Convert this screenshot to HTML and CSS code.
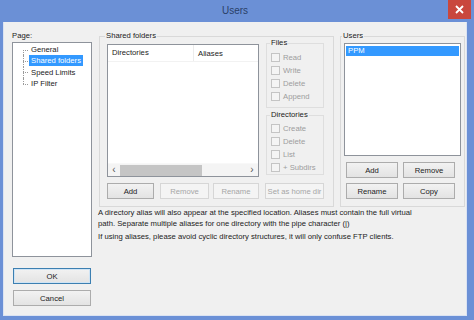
FILE: index.html
```html
<!DOCTYPE html>
<html lang="en">
<head>
    <meta charset="UTF-8">
    <title>Users</title>
    <link rel="stylesheet" href="styles.css">
</head>
<body>
    <div class="window">
        <div class="titlebar">
            <span class="title">Users</span>
            <button class="close-btn" aria-label="Close">
                <svg width="9" height="9" viewBox="0 0 9 9"><path d="M1 1L8 8M8 1L1 8" stroke="#fff" stroke-width="1.8"/></svg>
            </button>
        </div>
        <div class="client">
            <div class="side">
                <div class="page-label">Page:</div>
                <ul class="tree">
                    <li><span>General</span></li>
                    <li class="selected"><span>Shared folders</span></li>
                    <li><span>Speed Limits</span></li>
                    <li><span>IP Filter</span></li>
                </ul>
                <button class="btn default ok-btn">OK</button>
                <button class="btn cancel-btn">Cancel</button>
            </div>

            <div class="main">
                <div class="groups">
                    <fieldset class="group shared">
                        <legend>Shared folders</legend>
                        <div class="shared-body">
                            <div class="listview">
                                <div class="lv-header">
                                    <span class="col-dir">Directories</span>
                                    <span class="col-alias">Aliases</span>
                                </div>
                                <div class="lv-body"></div>
                                <div class="hscroll">
                                    <span class="arrow">&lsaquo;</span>
                                    <div class="track"><div class="thumb"></div></div>
                                    <span class="arrow">&rsaquo;</span>
                                </div>
                            </div>
                            <div class="perms">
                                <fieldset class="subgroup files">
                                    <legend>Files</legend>
                                    <label class="check"><span class="box"></span>Read</label>
                                    <label class="check"><span class="box"></span>Write</label>
                                    <label class="check"><span class="box"></span>Delete</label>
                                    <label class="check"><span class="box"></span>Append</label>
                                </fieldset>
                                <fieldset class="subgroup dirs">
                                    <legend>Directories</legend>
                                    <label class="check"><span class="box"></span>Create</label>
                                    <label class="check"><span class="box"></span>Delete</label>
                                    <label class="check"><span class="box"></span>List</label>
                                    <label class="check"><span class="box"></span>+ Subdirs</label>
                                </fieldset>
                            </div>
                        </div>
                        <div class="btn-row">
                            <button class="btn add-btn">Add</button>
                            <button class="btn remove-btn" disabled>Remove</button>
                            <button class="btn rename-btn" disabled>Rename</button>
                            <button class="btn home-btn" disabled>Set as home dir</button>
                        </div>
                    </fieldset>

                    <fieldset class="group users">
                        <legend>Users</legend>
                        <div class="user-list">
                            <div class="user-row selected">PPM</div>
                        </div>
                        <div class="user-buttons">
                            <button class="btn">Add</button>
                            <button class="btn">Remove</button>
                            <button class="btn">Rename</button>
                            <button class="btn">Copy</button>
                        </div>
                    </fieldset>
                </div>

                <p class="note">A directory alias will also appear at the specified location. Aliases must contain the full virtual<br>path. Separate multiple aliases for one directory with the pipe character (|)</p>
                <p class="note">If using aliases, please avoid cyclic directory structures, it will only confuse FTP clients.</p>
            </div>
        </div>
    </div>
</body>
</html>
```

FILE: styles.css
```css
* {
    box-sizing: border-box;
}
body {
    margin: 0;
    font-family: "Liberation Sans", Arial, sans-serif;
    font-size: 7.7px;
    color: #222;
    background: #6b90d6;
}
.window {
    width: 474px;
    height: 320px;
    display: flex;
    flex-direction: column;
    padding: 0 7px 4px 3px;
    background: #6b90d6;
}
.titlebar {
    height: 22px;
    display: grid;
    grid-template-columns: 1fr auto 1fr;
}
.title {
    grid-column: 2;
    font-size: 10px;
    line-height: 22px;
    color: #2a3f68;
}
.close-btn {
    grid-column: 3;
    justify-self: end;
    width: 23px;
    height: 19px;
    margin-right: -4px;
    border: none;
    padding: 0;
    background: #c9473d;
    display: flex;
    align-items: center;
    justify-content: center;
}
.client {
    flex: 1;
    display: flex;
    padding: 8px 0 0 8px;
    background: #f0f0f0;
    border: 1px solid #dbe3f2;
    border-top: none;
}

/* left column */
.side {
    width: 80px;
    display: flex;
    flex-direction: column;
    margin-top: -1px;
}
.page-label {
    line-height: 13px;
}
.tree {
    list-style: none;
    margin: 0;
    padding: 1px 0 0;
    height: 215px;
    background: #fff;
    border: 1px solid #8e939b;
}
.tree li {
    position: relative;
    height: 11.4px;
    line-height: 11.4px;
    padding-left: 16px;
}
.tree li span {
    padding: 1px 2px;
}
.tree li::before {
    content: '';
    position: absolute;
    left: 10px;
    top: 50%;
    width: 5px;
    border-top: 1px dotted #9a9a9a;
}
.tree li::after {
    content: '';
    position: absolute;
    left: 10px;
    top: 0;
    bottom: 0;
    border-left: 1px dotted #9a9a9a;
}
.tree li:first-child::after {
    top: 50%;
}
.tree li:last-child::after {
    bottom: 50%;
}
.tree li.selected span {
    background: #3399ff;
    color: #fff;
}

/* buttons */
.btn {
    height: 16px;
    padding: 0;
    font-family: inherit;
    font-size: 7.7px;
    color: #222;
    background: linear-gradient(#f2f2f2, #e3e3e3);
    border: 1px solid #acacac;
}
.btn.default {
    border-color: #3c7fb1;
    box-shadow: inset 0 0 0 1px #cfe4f5;
}
.btn:disabled {
    color: #a6a6a6;
    background: #f4f4f4;
    border-color: #d6d6d6;
}
.ok-btn {
    margin: 11px 1px 0 1px;
}
.cancel-btn {
    margin: 6px 1px 0 1px;
}

/* main column */
.main {
    flex: 1;
    margin-left: 7px;
}
.groups {
    display: flex;
    gap: 6px;
}
.group {
    margin: 0;
    padding: 2px 9px 7px 7px;
    border: 1px solid #d9d9d9;
    min-width: 0;
}
.group legend {
    padding: 0 1px;
    margin-left: -2px;
    line-height: 12px;
}
.shared {
    width: 235px;
}
.users {
    width: 125px;
    padding: 1px 3px 7px 3px;
}
.shared-body {
    display: flex;
    gap: 7px;
}
.listview {
    width: 152px;
    height: 133px;
    display: flex;
    flex-direction: column;
    background: #fff;
    border: 1px solid #8e939b;
}
.lv-header {
    height: 17px;
    display: flex;
    align-items: center;
    border-bottom: 1px solid #f2f2f2;
}
.col-dir {
    width: 86px;
    padding-left: 4px;
    border-right: 1px solid #ececec;
    line-height: 16px;
}
.col-alias {
    padding-left: 4px;
}
.lv-body {
    flex: 1;
}
.hscroll {
    height: 13px;
    display: flex;
    align-items: center;
    background: #f4f4f4;
    border-top: 1px solid #f8f8f8;
}
.arrow {
    width: 12px;
    text-align: center;
    font-size: 10px;
    line-height: 12px;
    color: #555;
}
.track {
    flex: 1;
    height: 11px;
}
.thumb {
    width: 82px;
    height: 11px;
    background: #c5c5c5;
}
.perms {
    width: 58px;
    margin-top: -6px;
    display: flex;
    flex-direction: column;
    gap: 2px;
}
.subgroup {
    margin: 0;
    padding: 3px 4px 4px 4px;
    border: 1px solid #dedede;
    min-width: 0;
}
.subgroup legend {
    padding: 0 1px;
    margin-left: -1px;
    line-height: 10px;
}
.subgroup.dirs {
    padding: 2px 4px 0 4px;
}
.check {
    display: flex;
    align-items: center;
    height: 13px;
    color: #9d9d9d;
}
.box {
    width: 9px;
    height: 9px;
    margin-right: 3px;
    background: #f4f4f4;
    border: 1px solid #c4c4c4;
}
.btn-row {
    display: flex;
    margin-top: 6px;
}
.add-btn {
    width: 47px;
}
.remove-btn {
    width: 49px;
    margin-left: 6px;
}
.rename-btn {
    width: 46px;
    margin-left: 4px;
}
.home-btn {
    width: 59px;
    margin-left: 6px;
}
.user-list {
    height: 113px;
    padding: 2px 1px;
    background: #fff;
    border: 1px solid #8e939b;
}
.user-row {
    height: 10px;
    line-height: 10px;
    padding-left: 2px;
}
.user-row.selected {
    background: #3399ff;
    color: #fff;
}
.user-buttons {
    display: grid;
    grid-template-columns: 52px 52px;
    gap: 5px;
    margin: 6px 0 0 2px;
}
.note {
    margin: 0 0 2px -1px;
    line-height: 11px;
}
```
